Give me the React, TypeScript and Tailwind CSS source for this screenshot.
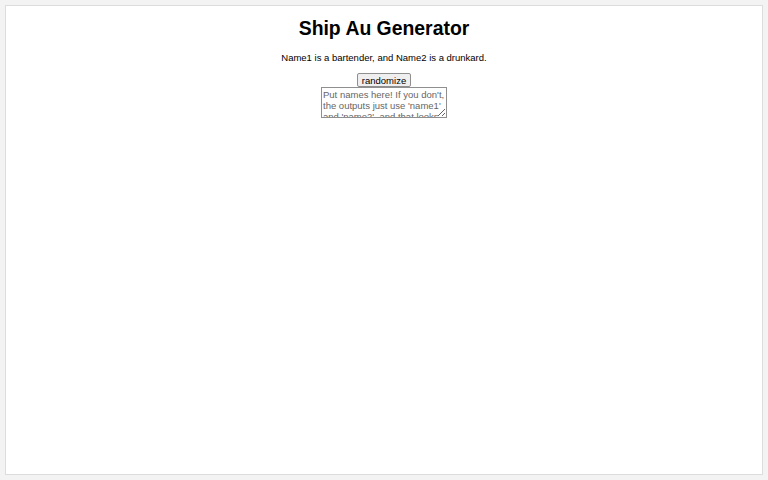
export default function App() {
  return (
    <div
      className="flex h-[480px] w-[768px] bg-[#f3f3f3] p-[5px]"
      style={{ fontFamily: '"Liberation Sans", Arial, sans-serif' }}
    >
      <div className="flex flex-1 flex-col items-center border border-[#dcdcdc] bg-white text-black">
        <h1 className="mt-[11px] text-[19.4px] font-bold leading-[22px]">Ship Au Generator</h1>
        <p className="mt-[13px] text-[9.5px] leading-[12px]">
          Name1 is a bartender, and Name2 is a drunkard.
        </p>
        <button className="mt-[9px] h-[14px] rounded-[2px] border border-[#8f8f8f] bg-[#efefef] px-[4px] text-[9.5px] leading-[11px]">
          randomize
        </button>
        <textarea
          className="h-[31px] w-[126px] resize border border-[#8f8f8f] px-[1px] pt-[1px] text-[9.5px] leading-[11px] text-black outline-none placeholder:text-[#666666]"
          placeholder="Put names here! If you don't, the outputs just use 'name1' and 'name2', and that looks weird."
        />
      </div>
    </div>
  );
}
